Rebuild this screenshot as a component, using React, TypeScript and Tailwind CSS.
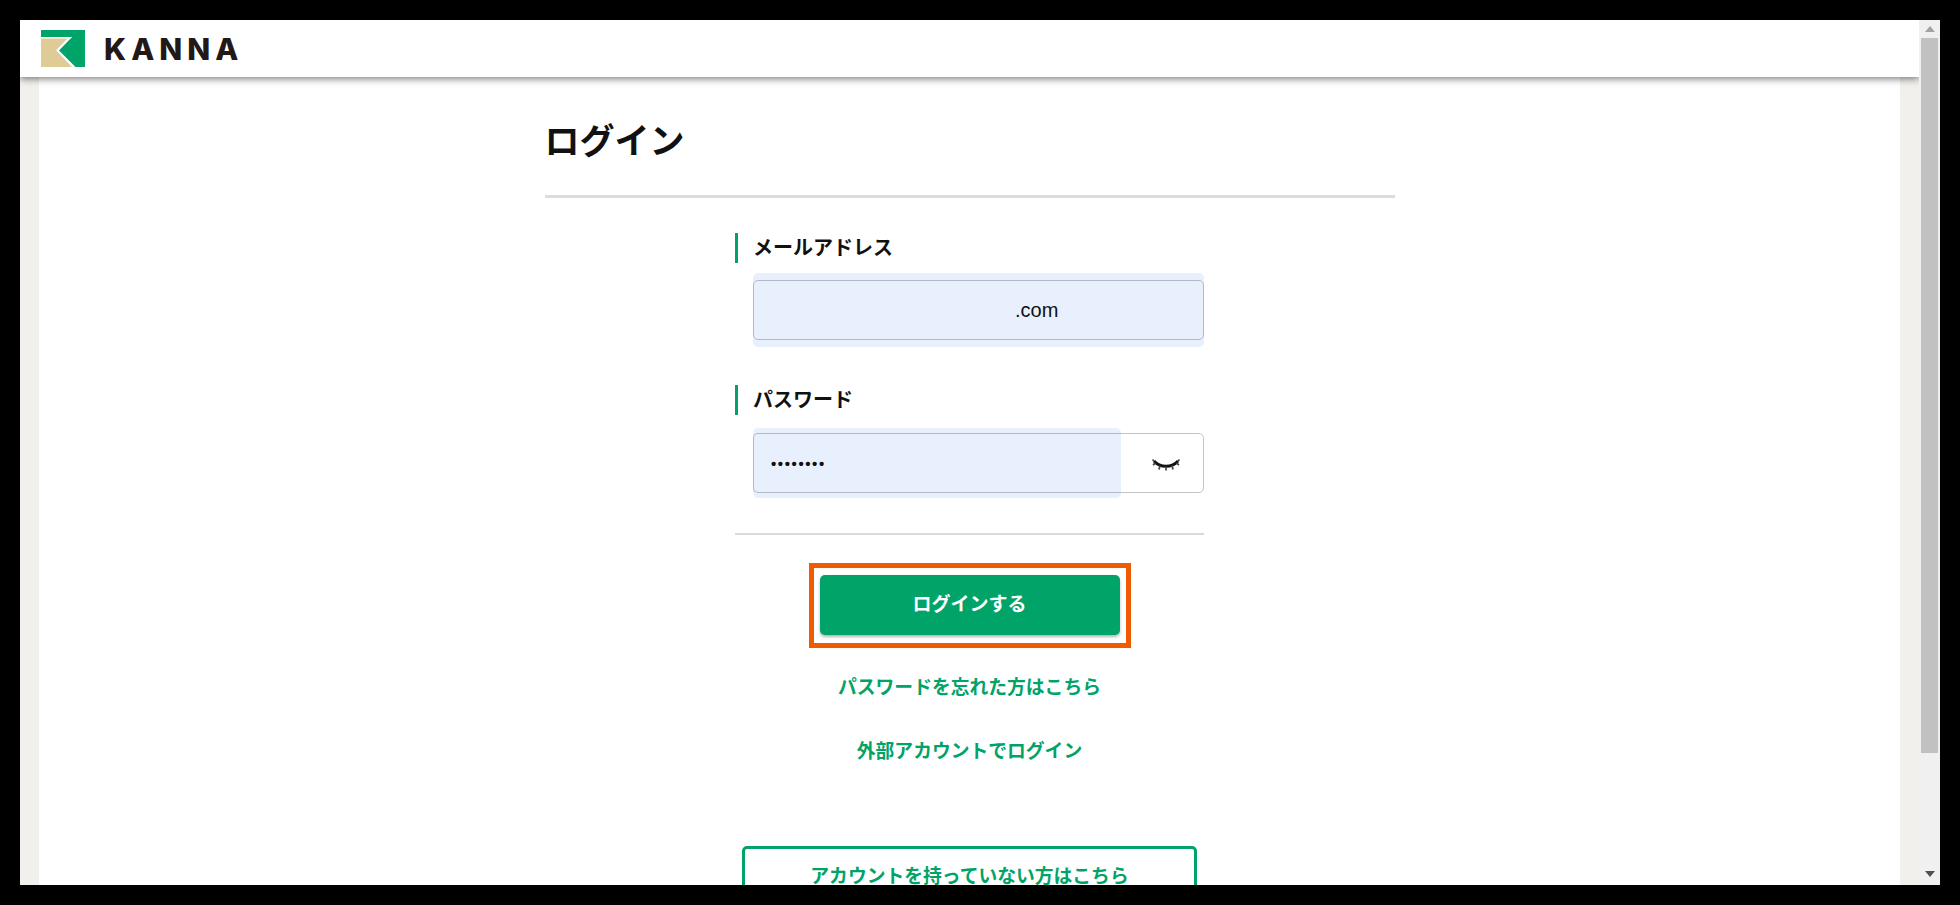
export default function App() {
  const font = { fontFamily: '"Liberation Sans", "Noto Sans CJK JP", sans-serif' };
  return (
    <div style={font} className="h-[905px] w-[1960px] overflow-hidden bg-black py-[20px] pl-[20px] pr-[20px]">
      <div className="flex h-[865px] w-[1920px] overflow-hidden">
        <div className="flex h-full w-[1899px] flex-col overflow-hidden bg-[#f1f0ec]">
          <header className="relative z-10 flex h-[57px] shrink-0 items-center bg-white pl-[21px] shadow-[0_2px_7px_rgba(0,0,0,0.5)]">
            <svg width="44" height="37" viewBox="0 0 44 37" className="mt-[-1px]">
              <rect width="44" height="37" fill="#00a368" />
              <path d="M0 7H31L15 21L31 37H0Z" fill="#ffffff" />
              <path d="M0 8.5H27L15 20.5 L 31 37 H0Z" fill="#decb96" />
              <path d="M28 7H31L18 20.5L34.5 37H31L15 20.5Z" fill="#ffffff" />
            </svg>
            <span className="ml-[19px] text-[30px] font-extrabold leading-none tracking-[5px] text-[#231815]" style={{ fontFamily: 'Inter, sans-serif' }}>KANNA</span>
          </header>
          <main className="mx-[19px] flex min-h-0 flex-1 flex-col items-center bg-white">
            <div className="w-[850px] shrink-0">
              <h1 className="mt-[42px] h-[79px] border-b-[3px] border-[#dcdcdc] text-[35px] font-bold leading-[46px] text-[#111111]">ログイン</h1>
              <form className="mx-auto mt-[35px] w-[469px]">
                <label className="block border-l-[3px] border-[#00a368] pl-[15px] text-[20px] font-bold leading-[30px] text-[#111111]">メールアドレス</label>
                <div className="ml-[18px] mt-[10px] rounded-[5px] bg-[#e8f0fe] py-[7px]">
                  <div className="flex h-[60px] items-center rounded-[5px] border border-[#b4b8c4] pl-[261px] text-[20px] text-[#111111]">.com</div>
                </div>
                <label className="mt-[38px] block border-l-[3px] border-[#00a368] pl-[15px] text-[20px] font-bold leading-[30px] text-[#111111]">パスワード</label>
                <div className="relative ml-[18px] mt-[18px] flex h-[60px] items-center rounded-[5px] border border-[#c4c4c4]">
                  <div className="absolute -bottom-[6px] -left-px -top-[6px] w-[368px] rounded-[5px] bg-[#e8f0fe]" />
                  <div className="absolute -inset-y-px -left-px w-[368px] rounded-l-[5px] border-y border-l border-[#b4b8c4]" />
                  <span className="relative pl-[17px] text-[15px] font-bold leading-none tracking-[1.6px] text-[#111111]">••••••••</span>
                  <svg width="28" height="16" viewBox="0 0 28 16" className="absolute left-[398px] top-[24px]" fill="none" stroke="#111111">
                    <path d="M2 3C8 10 20 10 26 3" strokeWidth="2.8" />
                    <path d="M2 3L0.5 1.5M26 3L27.5 1.5M3.5 5L1 7M24.5 5L27 7M8 7.5L7 11.5M14 8.5V12.5M20 7.5L21 11.5" strokeWidth="1.7" stroke="#444444" />
                  </svg>
                </div>
                <div className="mt-[40px] h-[2px] bg-[#d9d9d9]" />
              </form>
              <div className="mx-auto mt-[28px] flex w-[322px] flex-col items-center">
                <div className="h-[85px] w-[322px] border-[5px] border-[#f05a00] px-[6px] pt-[7px]">
                  <button className="h-[60px] w-[300px] rounded-[5px] bg-[#00a368] text-[19px] font-bold leading-[26px] text-white shadow-[0_2px_3px_rgba(0,0,0,0.3)]">ログインする</button>
                </div>
              </div>
              <div className="mt-[26px] flex flex-col items-center text-[18.8px] font-bold text-[#00a368]">
                <a className="leading-[28px]">パスワードを忘れた方はこちら</a>
                <a className="mt-[36px] leading-[28px]">外部アカウントでログイン</a>
              </div>
              <div className="mx-auto mt-[80px] flex h-[62px] w-[455px] items-start justify-center rounded-[5px] border-[3px] border-[#00a368] pt-[14px] text-[18.8px] font-bold leading-[28px] text-[#00a368]">アカウントを持っていない方はこちら</div>
            </div>
          </main>
        </div>
        <div className="flex w-[21px] shrink-0 flex-col items-center bg-[#f0f0f0]">
          <div className="flex h-[18px] w-full items-center justify-center">
            <svg width="10" height="6" viewBox="0 0 10 6"><path d="M5 0L10 6H0Z" fill="#a3a3a3" /></svg>
          </div>
          <div className="h-[715px] w-[17px] bg-[#c1c1c1]" />
          <div className="flex flex-1 items-end pb-[8px]">
            <svg width="10" height="6" viewBox="0 0 10 6"><path d="M5 6L10 0H0Z" fill="#505050" /></svg>
          </div>
        </div>
      </div>
    </div>
  );
}
